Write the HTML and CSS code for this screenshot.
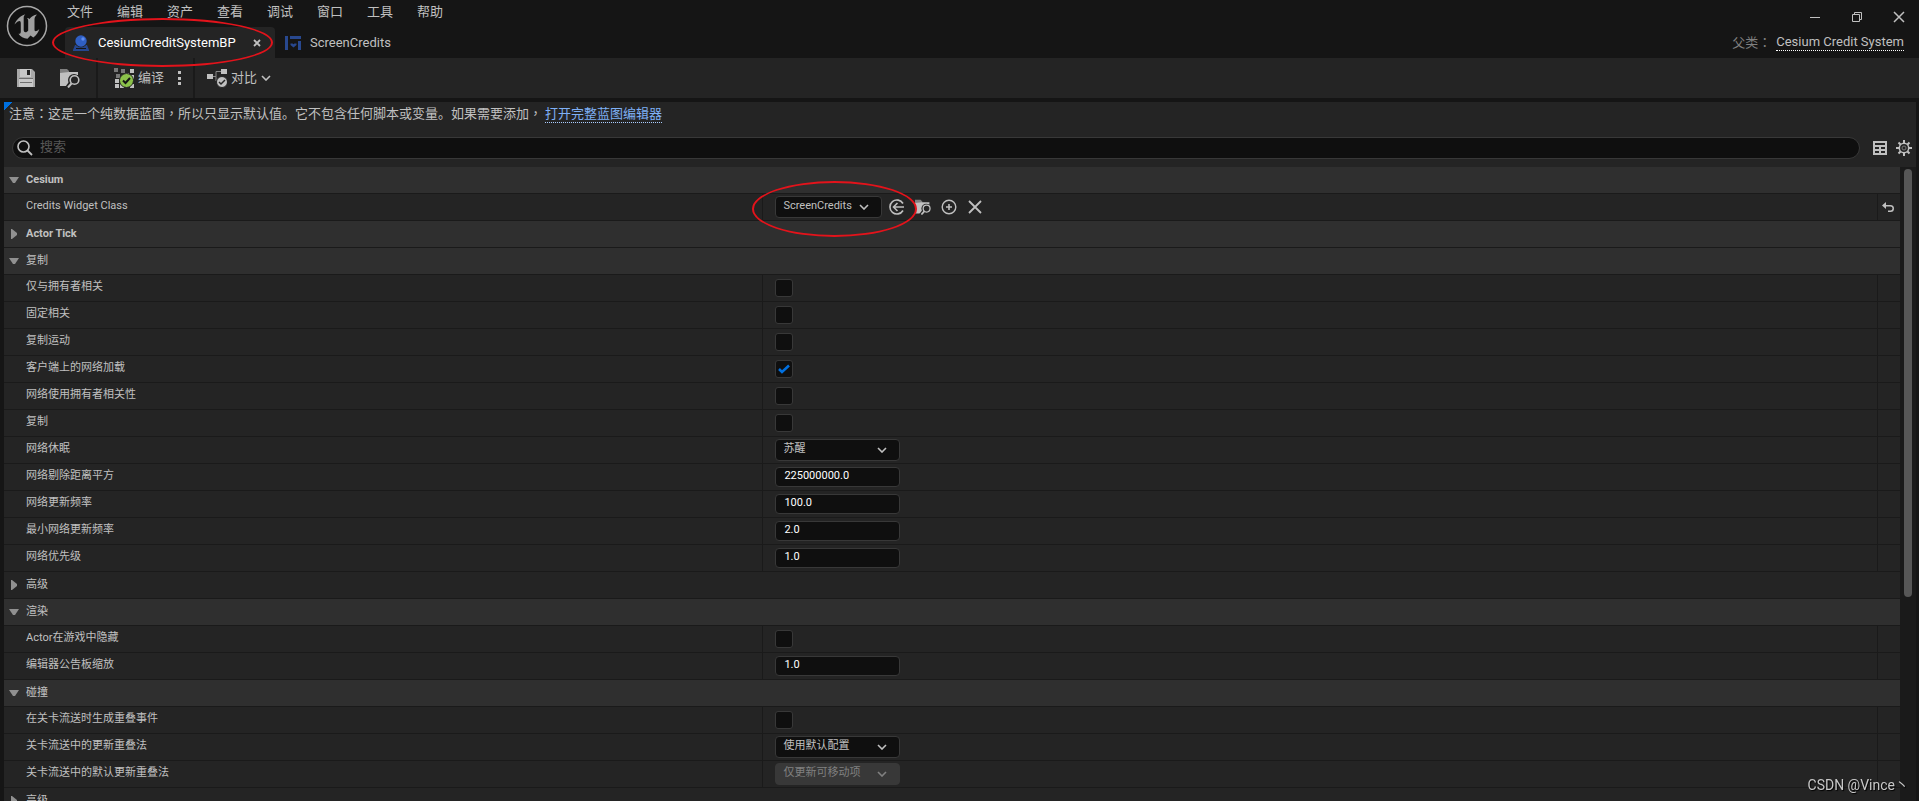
FILE: index.html
```html
<!DOCTYPE html>
<html lang="zh-CN">
<head>
  <meta charset="UTF-8">
  <meta name="viewport" content="width=device-width, initial-scale=1.0">
  <title>CesiumCreditSystemBP</title>
  <link rel="stylesheet" href="styles.css">
</head>
<body>
  <!-- shared icons -->
  <svg class="icon-defs" aria-hidden="true">
    <symbol id="chevron" viewBox="0 0 10 6"><path d="M1 1l4 4 4-4" fill="none" stroke="currentColor" stroke-width="1.6"/></symbol>
    <symbol id="arrow-down" viewBox="0 0 10 6"><path d="M0 0h10L6 6H4z" fill="currentColor"/></symbol>
    <symbol id="arrow-right" viewBox="0 0 6 10"><path d="M0 0h1l5 4v2l-5 4H0z" fill="currentColor"/></symbol>
    <symbol id="browse" viewBox="0 0 20 20">
      <path d="M0 1h7l2 2v2H0z" fill="#808080"/>
      <path d="M0 5l9-1h9v3H0zM0 6h11v12H0z" fill="currentColor"/>
      <circle cx="14" cy="12" r="6" fill="#242424"/>
      <path d="M11 14.500L7 20" stroke="#242424" stroke-width="4"/>
      <circle cx="14.500" cy="12" r="4.300" fill="none" stroke="currentColor" stroke-width="1.600"/>
      <path d="M11.500 15.500L8 19.500" stroke="currentColor" stroke-width="2"/>
    </symbol>
  </svg>

  <header class="titlebar">
    <svg class="logo" viewBox="0 0 42 42">
      <circle cx="21" cy="21" r="19.500" fill="#111" stroke="#a8a8a8" stroke-width="1.500"/>
      <path d="M20 9c-5 1.500-9.500 5-11.500 10.500 2-2.500 4-3.500 5-3.500 1 0 1.300 1 1.300 2.500v8c0 2-.8 2.500-2.300 2.200 2 3 5 4.800 9 5l3-3.200 2.800 2c3-2 5-5 6-8.500-1.500 1.500-2.700 2.200-3.700 2.200-.8 0-1.100-.6-1.100-1.700V14.500c0-2 1-3.500 2.500-5-3 .6-5.500 2-7.500 4.500-.6-.7-1.500-1-2.500-1 .9.900 1.200 1.700 1.200 3v9.500c-.7 1.200-1.700 1.800-2.700 1.800-1.300 0-1.800-.9-1.800-2.500V12.500c0-1.500.8-2.700 2.300-3.500z" fill="#a0a0a0"/>
    </svg>
    <div class="title-main">
      <nav class="menu">
        <button type="button">文件</button>
        <button type="button">编辑</button>
        <button type="button">资产</button>
        <button type="button">查看</button>
        <button type="button">调试</button>
        <button type="button">窗口</button>
        <button type="button">工具</button>
        <button type="button">帮助</button>
      </nav>
      <div class="tabs">
        <div class="tab active">
          <svg class="tab-icon" width="16" height="16" viewBox="0 0 16 16">
            <path d="M2 10L0 15v1h16v-1l-2-5z" fill="#25468f"/>
            <path d="M3 13.500h10" stroke="#151515"/>
            <circle cx="8" cy="6" r="6.500" fill="#242424"/>
            <circle cx="8" cy="6" r="5.700" fill="#2f5fc4"/>
            <circle cx="10" cy="4" r="1.700" fill="#5e8df0"/>
          </svg>
          <span class="tab-name">CesiumCreditSystemBP</span>
          <button type="button" class="tab-close" aria-label="关闭">
            <svg width="8" height="8" viewBox="0 0 8 8"><path d="M1 1l6 6M7 1L1 7" stroke="#c0c0c0" stroke-width="1.800"/></svg>
          </button>
          <span class="mark mark-tab"></span>
        </div>
        <div class="tab">
          <svg class="tab-icon" width="16" height="14" viewBox="0 0 16 14">
            <path d="M0 0h3v14H0zM5 0h11v3H5zM13 5h3v9h-3z" fill="#28488f"/>
            <path d="M8.500 11.500L5.500 9V7.500h2l1 .8 1-.8h2V9z" fill="#28488f"/>
          </svg>
          <span class="tab-name">ScreenCredits</span>
        </div>
      </div>
    </div>
    <div class="title-side">
      <div class="window-buttons">
        <button type="button" aria-label="最小化"><svg width="12" height="12" viewBox="0 0 12 12"><path d="M1 6.500h10" stroke="currentColor"/></svg></button>
        <button type="button" aria-label="还原"><svg width="12" height="12" viewBox="0 0 12 12"><path d="M1.500 3.500h7v7h-7zM3.500 3V1.500h7v7H9" fill="none" stroke="currentColor"/></svg></button>
        <button type="button" aria-label="关闭"><svg width="12" height="12" viewBox="0 0 12 12"><path d="M1 1l10 10M11 1L1 11" stroke="currentColor" stroke-width="1.500"/></svg></button>
      </div>
      <div class="parent-class"><span>父类<span class="punct" lang="zh-TW">：</span></span><a href="#">Cesium Credit System</a></div>
    </div>
  </header>

  <div class="toolbar">
    <div class="tool-group first">
      <button type="button" aria-label="保存">
        <svg width="18" height="18" viewBox="0 0 18 18"><path d="M0 0h15l3 3v15H0z" fill="#a8a8a8"/><path d="M3 0h11v8H3z" fill="#c8c8c8"/><path d="M10 1h3v5h-3z" fill="#242424"/><path d="M2 10h14v8H2z" fill="#c8c8c8"/><path d="M2 9h14v1H2zM3 13h12v1H3z" fill="#707070"/></svg>
      </button>
      <button type="button" aria-label="浏览"><svg width="20" height="20"><use href="#browse"/></svg></button>
    </div>
    <div class="tool-group compile">
      <button type="button">
        <svg width="20" height="20" viewBox="0 0 20 20">
          <path d="M0 0h4v4H0zM7 1h4v4H7zM2 6h4v4H2z" fill="#777"/>
          <path d="M16 1h4v4h-4zM11 5h4v4h-4zM1 11h4v4H1zM1 16h4v4H1zM6 16h4v4H6zM16 16h4v4h-4zM16 7h4v4h-4z" fill="#c0c0c0"/>
          <circle cx="12.500" cy="12.500" r="7" fill="#8bc24a" stroke="#242424"/>
          <path d="M9 12.500l2.500 2.500 4.500-5" fill="none" stroke="#151515" stroke-width="2"/>
        </svg>
        <span>编译</span>
      </button>
      <button type="button" class="dots" aria-label="编译选项"><svg width="4" height="14" viewBox="0 0 4 14"><path d="M1 0h3v3H1zM1 6h3v3H1zM1 11h3v3H1z" fill="#c0c0c0"/></svg></button>
    </div>
    <div class="tool-group">
      <button type="button">
        <svg width="20" height="20" viewBox="0 0 20 20">
          <path d="M0 6h6v5H0zM14 1h6v5h-6z" fill="#c0c0c0"/>
          <path d="M6 8.500h3V3.500h5M9 8.500V13" fill="none" stroke="#888"/>
          <circle cx="15" cy="14" r="5.500" fill="#c0c0c0" stroke="#242424"/>
          <path d="M12 14l2 2 4-4" fill="none" stroke="#242424" stroke-width="1.500"/>
        </svg>
        <span>对比</span>
        <svg class="chevron" width="10" height="6"><use href="#chevron"/></svg>
      </button>
    </div>
  </div>

  <main class="panel">
    <div class="notice">注意<span class="punct" lang="zh-TW">：</span>这是一个纯数据蓝图<span class="punct" lang="zh-TW">，</span>所以只显示默认值。它不包含任何脚本或变量。如果需要添加<span class="punct" lang="zh-TW">，</span><a href="#">打开完整蓝图编辑器</a></div>

    <div class="search-row">
      <label class="search">
        <svg width="16" height="16" viewBox="0 0 16 16"><circle cx="6.500" cy="6.500" r="5.500" fill="none" stroke="#c0c0c0" stroke-width="1.600"/><path d="M10.500 10.500l4.500 4.500" stroke="#c0c0c0" stroke-width="1.800"/></svg>
        <input type="text" placeholder="搜索" aria-label="搜索">
      </label>
      <button type="button" aria-label="属性矩阵"><svg width="14" height="14" viewBox="0 0 14 14"><path fill-rule="evenodd" d="M0 0h14v14H0zM2 2v2h10V2zM2 6v2h4V6zM8 6v2h4V6zM2 10v2h4v-2zM8 10v2h4v-2z" fill="#c0c0c0"/></svg></button>
      <button type="button" aria-label="设置"><svg width="16" height="16" viewBox="0 0 16 16"><circle cx="8" cy="8" r="4.700" fill="none" stroke="#c0c0c0" stroke-width="1.500"/><circle cx="8" cy="8" r="2" fill="none" stroke="#777"/><path d="M8 0v3M8 13v3M0 8h3M13 8h3M2.500 2.500l2 2M11.500 11.500l2 2M13.500 2.500l-2 2M4.500 11.500l-2 2" stroke="#c0c0c0" stroke-width="2"/></svg></button>
    </div>

    <div class="details">
      <div class="rows">
        <button type="button" class="section"><svg width="10" height="6"><use href="#arrow-down"/></svg>Cesium</button>
        <div class="row">
          <label class="name" for="widgetClass">Credits Widget Class</label>
          <div class="value">
            <span class="select fit"><select id="widgetClass"><option>ScreenCredits</option></select><svg width="10" height="6"><use href="#chevron"/></svg></span>
            <div class="asset-tools">
              <button type="button" aria-label="使用所选"><svg width="16" height="16" viewBox="0 0 16 16"><path d="M14 4.500a7 7 0 1 0 0 7M15 8H5M8.500 4L4.500 8l4 4" fill="none" stroke="currentColor" stroke-width="1.600"/></svg></button>
              <button type="button" aria-label="浏览"><svg width="16" height="16"><use href="#browse"/></svg></button>
              <button type="button" aria-label="新建"><svg width="16" height="16" viewBox="0 0 16 16"><circle cx="8" cy="8" r="6.800" fill="none" stroke="currentColor" stroke-width="1.400"/><path d="M8 5v6M5 8h6" stroke="currentColor" stroke-width="1.600"/></svg></button>
              <button type="button" aria-label="清除"><svg width="16" height="16" viewBox="0 0 16 16"><path d="M2 2l12 12M14 2L2 14" stroke="currentColor" stroke-width="1.800"/></svg></button>
            </div>
            <span class="mark mark-class"></span>
          </div>
          <div class="reset"><button type="button" aria-label="重置"><svg width="12" height="10" viewBox="0 0 12 10"><path d="M4 0L0 3.500 4 7V4.500h4.500q2 0 2 2t-2 2H6V10h2.500Q12 10 12 6.500T8.500 3H4z" fill="#c0c0c0"/></svg></button></div>
        </div>
        <button type="button" class="section"><svg width="10" height="10"><use href="#arrow-right"/></svg>Actor Tick</button>
        <button type="button" class="section cjk"><svg width="10" height="6"><use href="#arrow-down"/></svg><span>复制</span></button>
        <div class="row"><label class="name" for="ownerRelevant">仅与拥有者相关</label><div class="value"><input type="checkbox" id="ownerRelevant"></div><div class="reset"></div></div>
        <div class="row"><label class="name" for="alwaysRelevant">固定相关</label><div class="value"><input type="checkbox" id="alwaysRelevant"></div><div class="reset"></div></div>
        <div class="row"><label class="name" for="replicateMovement">复制运动</label><div class="value"><input type="checkbox" id="replicateMovement"></div><div class="reset"></div></div>
        <div class="row"><label class="name" for="netLoad">客户端上的网络加载</label><div class="value"><span class="check"><input type="checkbox" id="netLoad" checked><svg width="12" height="10" viewBox="0 0 12 10"><path d="M1 5l3 3 7-6.500" fill="none" stroke="#0070e0" stroke-width="2.500"/></svg></span></div><div class="reset"></div></div>
        <div class="row"><label class="name" for="ownerRelevancy">网络使用拥有者相关性</label><div class="value"><input type="checkbox" id="ownerRelevancy"></div><div class="reset"></div></div>
        <div class="row"><label class="name" for="replicates">复制</label><div class="value"><input type="checkbox" id="replicates"></div><div class="reset"></div></div>
        <div class="row"><label class="name" for="dormancy">网络休眠</label><div class="value"><span class="select"><select id="dormancy"><option>苏醒</option></select><svg width="10" height="6"><use href="#chevron"/></svg></span></div><div class="reset"></div></div>
        <div class="row"><label class="name" for="cullDistance">网络剔除距离平方</label><div class="value"><input type="text" id="cullDistance" value="225000000.0"></div><div class="reset"></div></div>
        <div class="row"><label class="name" for="updateFrequency">网络更新频率</label><div class="value"><input type="text" id="updateFrequency" value="100.0"></div><div class="reset"></div></div>
        <div class="row"><label class="name" for="minFrequency">最小网络更新频率</label><div class="value"><input type="text" id="minFrequency" value="2.0"></div><div class="reset"></div></div>
        <div class="row"><label class="name" for="netPriority">网络优先级</label><div class="value"><input type="text" id="netPriority" value="1.0"></div><div class="reset"></div></div>
        <button type="button" class="section advanced"><svg width="10" height="10"><use href="#arrow-right"/></svg><span>高级</span></button>
        <button type="button" class="section cjk"><svg width="10" height="6"><use href="#arrow-down"/></svg><span>渲染</span></button>
        <div class="row"><label class="name" for="hidden">Actor在游戏中隐藏</label><div class="value"><input type="checkbox" id="hidden"></div><div class="reset"></div></div>
        <div class="row"><label class="name" for="billboardScale">编辑器公告板缩放</label><div class="value"><input type="text" id="billboardScale" value="1.0"></div><div class="reset"></div></div>
        <button type="button" class="section cjk"><svg width="10" height="6"><use href="#arrow-down"/></svg><span>碰撞</span></button>
        <div class="row"><label class="name" for="overlapEvents">在关卡流送时生成重叠事件</label><div class="value"><input type="checkbox" id="overlapEvents"></div><div class="reset"></div></div>
        <div class="row"><label class="name" for="overlapMethod">关卡流送中的更新重叠法</label><div class="value"><span class="select"><select id="overlapMethod"><option>使用默认配置</option></select><svg width="10" height="6"><use href="#chevron"/></svg></span></div><div class="reset"></div></div>
        <div class="row"><label class="name" for="defaultOverlap">关卡流送中的默认更新重叠法</label><div class="value"><span class="select"><select id="defaultOverlap" disabled><option>仅更新可移动项</option></select><svg width="10" height="6"><use href="#chevron"/></svg></span></div><div class="reset"></div></div>
        <button type="button" class="section advanced"><svg width="10" height="10"><use href="#arrow-right"/></svg><span>高级</span></button>
      </div>
      <div class="scrollbar"><div class="thumb"></div></div>
    </div>
  </main>

  <div class="watermark">CSDN @Vince丶</div>
</body>
</html>
```
FILE: styles.css
```css
* {
  box-sizing: border-box;
}

body {
  margin: 0;
  height: 100vh;
  display: flex;
  flex-direction: column;
  overflow: hidden;
  background-color: #151515;
  color: #c0c0c0;
  font-family: Roboto, "Noto Sans CJK SC", sans-serif;
  font-size: 13px;
}

button,
input,
select {
  font: inherit;
  color: inherit;
}

button {
  background: none;
  border: 0;
  padding: 0;
  display: flex;
  align-items: center;
}

svg {
  display: block;
  flex: none;
}

.icon-defs {
  position: absolute;
  width: 0;
  height: 0;
}

/* full-width punctuation centred in its cell */
.punct {
  font-family: "Noto Sans CJK TC", sans-serif;
}

/* title bar */
.titlebar {
  display: flex;
  flex: none;
  height: 58px;
}

.logo {
  width: 42px;
  height: 42px;
  margin: 5px 0 0 6px;
}

.title-main {
  flex: 1;
  padding-left: 17px;
}

.menu {
  display: flex;
  gap: 24px;
  height: 27px;
  padding: 0 0 6px 2px;
}

.tabs {
  display: flex;
  height: 31px;
}

.tab {
  position: relative;
  display: flex;
  align-items: center;
  padding: 0 10px;
}

.tab.active {
  width: 210px;
  padding: 0 14px 0 8px;
  background-color: #242424;
  border-radius: 4px 4px 0 0;
  color: #fff;
}

.tab-icon {
  margin-right: 9px;
}

.tab-close {
  margin-left: auto;
}

/* red ellipse highlights */
.mark {
  position: absolute;
  z-index: 1;
  border: 2px solid #e3131b;
  border-radius: 50%;
  pointer-events: none;
}

.mark-tab {
  left: -13px;
  top: -9px;
  width: 221px;
  height: 49px;
}

.mark-class {
  left: -11px;
  top: -13px;
  width: 165px;
  height: 56px;
}

.title-side {
  display: flex;
  flex-direction: column;
  align-items: flex-end;
  padding-right: 14px;
}

.window-buttons {
  display: flex;
  gap: 30px;
  padding-top: 11px;
  height: 32px;
  align-items: flex-start;
}

.parent-class {
  display: flex;
  gap: 5px;
  padding-right: 1px;
  color: #808080;
}

.parent-class a {
  color: #c0c0c0;
  line-height: 16px;
  height: 17px;
  margin-top: 2px;
  text-decoration: none;
  border-bottom: 1px dotted #fff;
}

/* toolbar */
.toolbar {
  display: flex;
  flex: none;
  height: 40px;
  background-color: #242424;
}

.tool-group {
  display: flex;
  align-items: center;
  padding: 0 12px;
  border-right: 2px solid #1a1a1a;
}

.tool-group.first {
  width: 98px;
  padding-left: 17px;
  gap: 25px;
}

.tool-group.compile {
  width: 97px;
  padding: 0 0 0 16px;
  gap: 13px;
}

.tool-group:last-child {
  border-right: 0;
}

.tool-group button {
  gap: 4px;
}

.tool-group span {
  padding-bottom: 3px;
}

/* details panel */
.panel {
  flex: 1;
  min-height: 0;
  display: flex;
  flex-direction: column;
  margin: 4px 3px 0 4px;
  background: linear-gradient(135deg, #0070e0 6px, #242424 6px);
}

.notice {
  padding: 1px 5px 0;
  line-height: 20px;
  height: 35px;
}

.notice a {
  display: inline-block;
  height: 18px;
  margin-left: 3px;
  line-height: 18px;
  color: #7fb0f5;
  text-decoration: none;
  border-bottom: 1px dotted #a9ccff;
}

.search-row {
  display: flex;
  align-items: center;
  gap: 9px;
  height: 22px;
  margin: 0 4px 8px 8px;
}

.search {
  flex: 1;
  display: flex;
  align-items: center;
  height: 22px;
  margin-right: 4px;
  padding-left: 4px;
  background-color: #0f0f0f;
  border: 1px solid #383838;
  border-radius: 11px;
}

.search input {
  flex: 1;
  height: 20px;
  padding: 0 0 3px 7px;
  border: 0;
  background: none;
  outline: none;
}

.search input::placeholder {
  color: #575757;
}

.details {
  flex: 1;
  min-height: 0;
  display: flex;
}

.rows {
  flex: 1;
  overflow: hidden;
  font-size: 11px;
}

.section {
  width: 100%;
  height: 27px;
  padding: 0 0 1px 5px;
  gap: 7px;
  background-color: #2f2f2f;
  border-bottom: 1px solid #1a1a1a;
  font-weight: bold;
}

.section svg {
  color: #909090;
}

.section.cjk,
.section.advanced {
  font-weight: normal;
}

.section span {
  padding-bottom: 3px;
}

.section.advanced {
  background-color: #242424;
}

.row {
  display: flex;
  height: 27px;
  border-bottom: 1px solid #1a1a1a;
}

.name {
  width: 40%;
  padding-left: 22px;
  line-height: 24px;
}

.value {
  position: relative;
  flex: 1;
  display: flex;
  align-items: center;
  padding-left: 12px;
  border-left: 1px solid #1a1a1a;
}

.reset {
  display: flex;
  align-items: center;
  width: 23px;
  padding-left: 4px;
  border-left: 1px solid #1a1a1a;
}

.value input {
  margin: 0;
  background-color: #0f0f0f;
  border: 1px solid #383838;
  border-radius: 4px;
}

.value input[type="text"] {
  width: 125px;
  height: 20px;
  padding: 0 8px 3px;
  color: #fff;
}

.value input[type="checkbox"] {
  appearance: none;
  display: block;
  width: 18px;
  height: 18px;
  border-radius: 3px;
}

.check {
  position: relative;
}

.check svg {
  position: absolute;
  left: 3px;
  top: 4px;
  pointer-events: none;
}

.select {
  position: relative;
  width: 125px;
}

.select.fit {
  width: 107px;
}

.select select {
  appearance: none;
  display: block;
  width: 100%;
  height: 22px;
  padding: 0 24px 3px 7px;
  background-color: #0f0f0f;
  border: 1px solid #383838;
  border-radius: 4px;
}

.select select:disabled {
  opacity: 1;
  background-color: #383838;
  color: #808080;
}

.select svg {
  position: absolute;
  right: 13px;
  top: 8px;
  pointer-events: none;
}

.select select:disabled + svg {
  color: #808080;
}

.asset-tools {
  display: flex;
  gap: 10px;
  margin-left: 7px;
}

/* scrollbar */
.scrollbar {
  width: 16px;
  padding: 2px 4px;
  background-color: #1a1a1a;
}

.thumb {
  height: 68%;
  border-radius: 4px;
  background-color: #575757;
}

.watermark {
  position: fixed;
  right: 10px;
  bottom: 7px;
  color: #c8c8c8;
  font-size: 14px;
  text-shadow: 1px 1px 1px #000;
}
```
